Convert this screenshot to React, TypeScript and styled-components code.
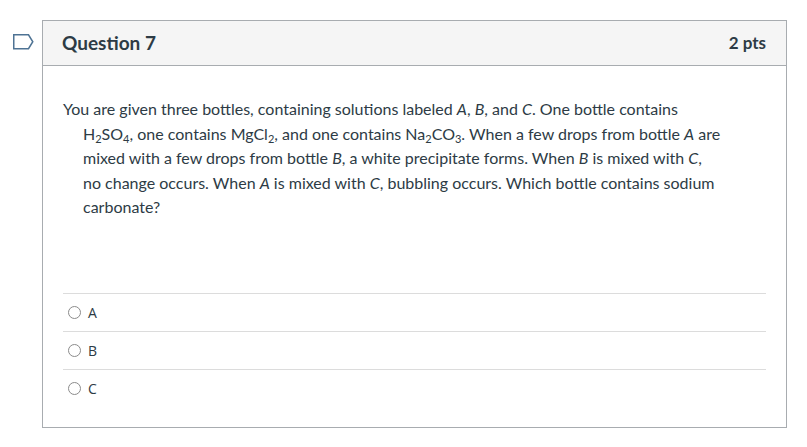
import React from "react";
import styled, { createGlobalStyle } from "styled-components";

const Global = createGlobalStyle`
  html, body { margin: 0; padding: 0; background: #fff; }
  body { font-family: Lato, "Open Sans", sans-serif; color: #2d3b45; }
`;

const Page = styled.div`
  display: flex;
  align-items: flex-start;
  padding: 20px 20px 0 0;
`;

const FlagCol = styled.div`
  width: 42px;
  display: flex;
  justify-content: flex-start;
  padding-top: 14px;
  padding-left: 13px;
  box-sizing: border-box;
  flex-shrink: 0;
`;

const Card = styled.div`
  width: 746px;
  height: 408px;
  box-sizing: border-box;
  border: 1px solid #a8acb0;
  display: flex;
  flex-direction: column;
`;

const Header = styled.div`
  height: 45px;
  box-sizing: border-box;
  background: #f5f5f5;
  border-bottom: 1px solid #a8acb0;
  display: flex;
  align-items: center;
  justify-content: space-between;
  padding: 0 20px 2px 19px;
`;

const Title = styled.div`
  font-size: 19px;
  font-weight: 700;
  color: #2d3b45;
`;

const Points = styled.div`
  font-size: 17px;
  font-weight: 700;
  color: #2d3b45;
`;

const Body = styled.div`
  padding: 31px 20px 0 20px;
`;

const Question = styled.p`
  margin: 0;
  font-size: 16px;
  line-height: 24.5px;
  padding-left: 20px;
  text-indent: -20px;
  color: #2d3b45;
  white-space: nowrap;

  sub {
    font-size: 11px;
    line-height: 0;
    vertical-align: -3px;
  }
`;

const Answers = styled.div`
  margin-top: 73px;
  display: flex;
  flex-direction: column;
`;

const AnswerRow = styled.label`
  border-top: 1px solid #dcdcdc;
  height: 37px;
  display: flex;
  align-items: center;
  gap: 7px;
  padding-left: 5px;
  font-size: 14px;
  color: #2d3b45;
  font-family: "Open Sans", Lato, sans-serif;
`;

const Radio = styled.span`
  width: 11px;
  height: 11px;
  border: 1px solid #8b8b8b;
  border-radius: 50%;
  display: inline-block;
  box-sizing: content-box;
`;

const Flag = () => (
  <svg width="22" height="17" viewBox="0 0 22 17">
    <path d="M0.75 0.75 H15.5 L19.8 7.75 L15.5 14.75 H0.75 Z" fill="none" stroke="#4e7394" strokeWidth="1.5" />
  </svg>
);

export default function App() {
  return (
    <>
      <Global />
      <Page>
        <FlagCol>
          <Flag />
        </FlagCol>
        <Card>
          <Header>
            <Title>Question 7</Title>
            <Points>2 pts</Points>
          </Header>
          <Body>
            <Question>
              You are given three bottles, containing solutions labeled <i>A</i>, <i>B</i>, and <i>C</i>. One bottle contains
              <br />
              H<sub>2</sub>SO<sub>4</sub>, one contains MgCl<sub>2</sub>, and one contains Na<sub>2</sub>CO<sub>3</sub>. When a few drops from bottle <i>A</i> are
              <br />
              mixed with a few drops from bottle <i>B</i>, a white precipitate forms. When <i>B</i> is mixed with <i>C</i>,
              <br />
              no change occurs. When <i>A</i> is mixed with <i>C</i>, bubbling occurs. Which bottle contains sodium
              <br />
              carbonate?
            </Question>
            <Answers>
              {["A", "B", "C"].map((l) => (
                <AnswerRow key={l}>
                  <Radio />
                  {l}
                </AnswerRow>
              ))}
            </Answers>
          </Body>
        </Card>
      </Page>
    </>
  );
}
